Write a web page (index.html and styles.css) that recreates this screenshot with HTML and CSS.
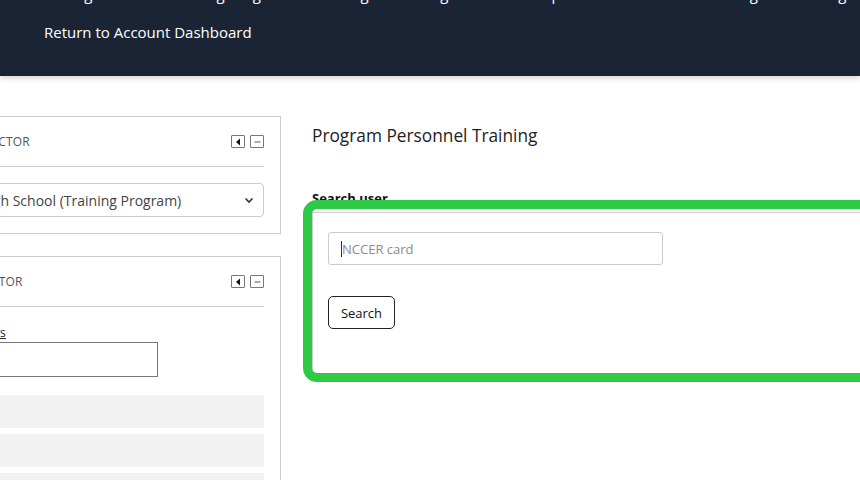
FILE: index.html
```html
<!DOCTYPE html>
<html lang="en">
<head>
<meta charset="utf-8">
<title>Program Personnel Training</title>
<link rel="stylesheet" href="styles.css">
</head>
<body>
<header class="topbar">
  <nav class="topnav">
    <span>Programs</span><span>Training Programs</span><span>Program Management</span><span>Reports</span><span>Instructor Training</span><span>Settings</span>
  </nav>
  <a class="back-link" href="#">Return to Account Dashboard</a>
</header>

<div class="layout">
  <aside class="sidebar">
    <section class="panel">
      <div class="panel-head">
        <span class="panel-title t1">Program Selector</span>
        <span class="tools">
          <span class="tool"><svg width="11" height="10" viewBox="0 0 11 10"><path d="M3 5 L7 1.5 V8.5 Z" fill="#111"/></svg></span>
          <span class="tool"><svg width="11" height="10" viewBox="0 0 11 10"><path d="M2.5 5 H8.5" stroke="#555" stroke-width="1"/></svg></span>
        </span>
      </div>
      <div class="panel-body">
        <div class="select">
          <span class="select-text">High School (Training Program)</span>
          <svg class="chev" width="10" height="7" viewBox="0 0 10 7"><path d="M1.5 1.5 L5 5 L8.5 1.5" fill="none" stroke="#333" stroke-width="1.6"/></svg>
        </div>
      </div>
    </section>

    <section class="panel">
      <div class="panel-head">
        <span class="panel-title t2">Instructor</span>
        <span class="tools">
          <span class="tool"><svg width="11" height="10" viewBox="0 0 11 10"><path d="M3 5 L7 1.5 V8.5 Z" fill="#111"/></svg></span>
          <span class="tool"><svg width="11" height="10" viewBox="0 0 11 10"><path d="M2.5 5 H8.5" stroke="#555" stroke-width="1"/></svg></span>
        </span>
      </div>
      <div class="panel-body">
        <a class="filter-link" href="#">Filter instructors</a>
        <div class="filter-input"></div>
        <div class="rows">
          <div class="row"></div>
          <div class="row"></div>
          <div class="row"></div>
        </div>
      </div>
    </section>
  </aside>

  <main class="content">
    <h1 class="title">Program Personnel Training</h1>
    <label class="field-label">Search user</label>
    <div class="search-card">
      <div class="input"><span class="caret"></span><span class="placeholder">NCCER card</span></div>
      <button class="btn" type="button">Search</button>
    </div>
    <div class="highlight"></div>
  </main>
</div>
</body>
</html>
```

FILE: styles.css
```css
* { box-sizing: border-box; }

html, body {
  margin: 0;
  padding: 0;
  height: 100%;
  overflow: hidden;
  background: #fff;
  font-family: "Open Sans", "Noto Sans", "Liberation Sans", sans-serif;
  color: #222;
}

.topbar {
  display: flow-root;
  height: 76px;
  background: #1b2435;
  box-shadow: 0 2px 6px rgba(0, 0, 0, 0.18);
  position: relative;
  z-index: 1;
}

.topnav {
  display: flex;
  gap: 40px;
  padding-left: 60px;
  margin-top: -16px;
  height: 20px;
  line-height: 20px;
  font-size: 15px;
  color: #fff;
  white-space: nowrap;
  overflow: hidden;
}

.back-link {
  display: block;
  margin-top: 18px;
  padding-left: 44px;
  font-size: 15px;
  line-height: 20px;
  color: #fff;
  text-decoration: none;
}

.layout {
  display: flex;
  padding-top: 40px;
}

.sidebar {
  flex: 0 0 400px;
  margin-left: -119px;
  display: flex;
  flex-direction: column;
  gap: 22px;
}

.panel {
  border: 1px solid #ccc;
  padding: 0 16px 16px;
}

.panel-head {
  height: 50px;
  display: flex;
  align-items: center;
  justify-content: space-between;
  border-bottom: 1px solid #ccc;
}

.panel-title {
  font-size: 12px;
  text-transform: uppercase;
  color: #555;
  letter-spacing: 0.2px;
}

.t1 { padding-left: 10px; }
.t2 { padding-left: 50px; }

.tools {
  display: flex;
  gap: 5px;
}

.tool {
  width: 14px;
  height: 13px;
  border: 1px solid #777;
  border-radius: 1px;
  display: flex;
  align-items: center;
  justify-content: center;
  background: #fff;
}

.panel-body {
  padding-top: 16px;
}

.select {
  height: 34px;
  border: 1px solid #ccc;
  border-radius: 4px;
  display: flex;
  align-items: center;
  justify-content: space-between;
  padding: 0 9px 0 80px;
  font-size: 14px;
  color: #444;
}

.filter-link {
  display: block;
  font-size: 12px;
  color: #222;
  text-decoration: underline;
  padding-left: 16px;
  line-height: 16px;
  margin-top: 2px;
}

.filter-input {
  width: 260px;
  height: 35px;
  border: 1px solid #777;
  margin-top: 1px;
}

.rows {
  margin-top: 18px;
  display: flex;
  flex-direction: column;
  gap: 6px;
}

.row {
  height: 33px;
  background: #f2f2f2;
}

.content {
  position: relative;
  flex: 1;
  padding-left: 31px;
}

.title {
  margin: 8px 0 0;
  font-size: 17.3px;
  font-weight: 500;
  line-height: 24px;
  color: #222;
}

.field-label {
  display: block;
  margin-top: 41px;
  font-size: 13px;
  font-weight: 700;
  line-height: 18px;
  color: #111;
}

.search-card {
  margin-top: 5px;
  border: 1px solid #ccc;
  border-right: 0;
  padding: 19px 15px 44px;
}

.input {
  width: 335px;
  height: 33px;
  border: 1px solid #ccc;
  border-radius: 3px;
  display: flex;
  align-items: center;
  padding-left: 12px;
  font-size: 13px;
}

.caret {
  width: 1px;
  height: 16px;
  background: #333;
}

.placeholder {
  color: #8a8a8a;
}

.btn {
  display: block;
  margin-top: 31px;
  width: 67px;
  height: 33px;
  border: 1px solid #222;
  border-radius: 5px;
  background: #fff;
  font-family: inherit;
  font-size: 13px;
  color: #111;
  padding: 0;
}

.highlight {
  position: absolute;
  left: 22px;
  top: 84px;
  width: 620px;
  height: 182px;
  border: 9px solid #2fca45;
  border-radius: 14px;
  pointer-events: none;
}
```
